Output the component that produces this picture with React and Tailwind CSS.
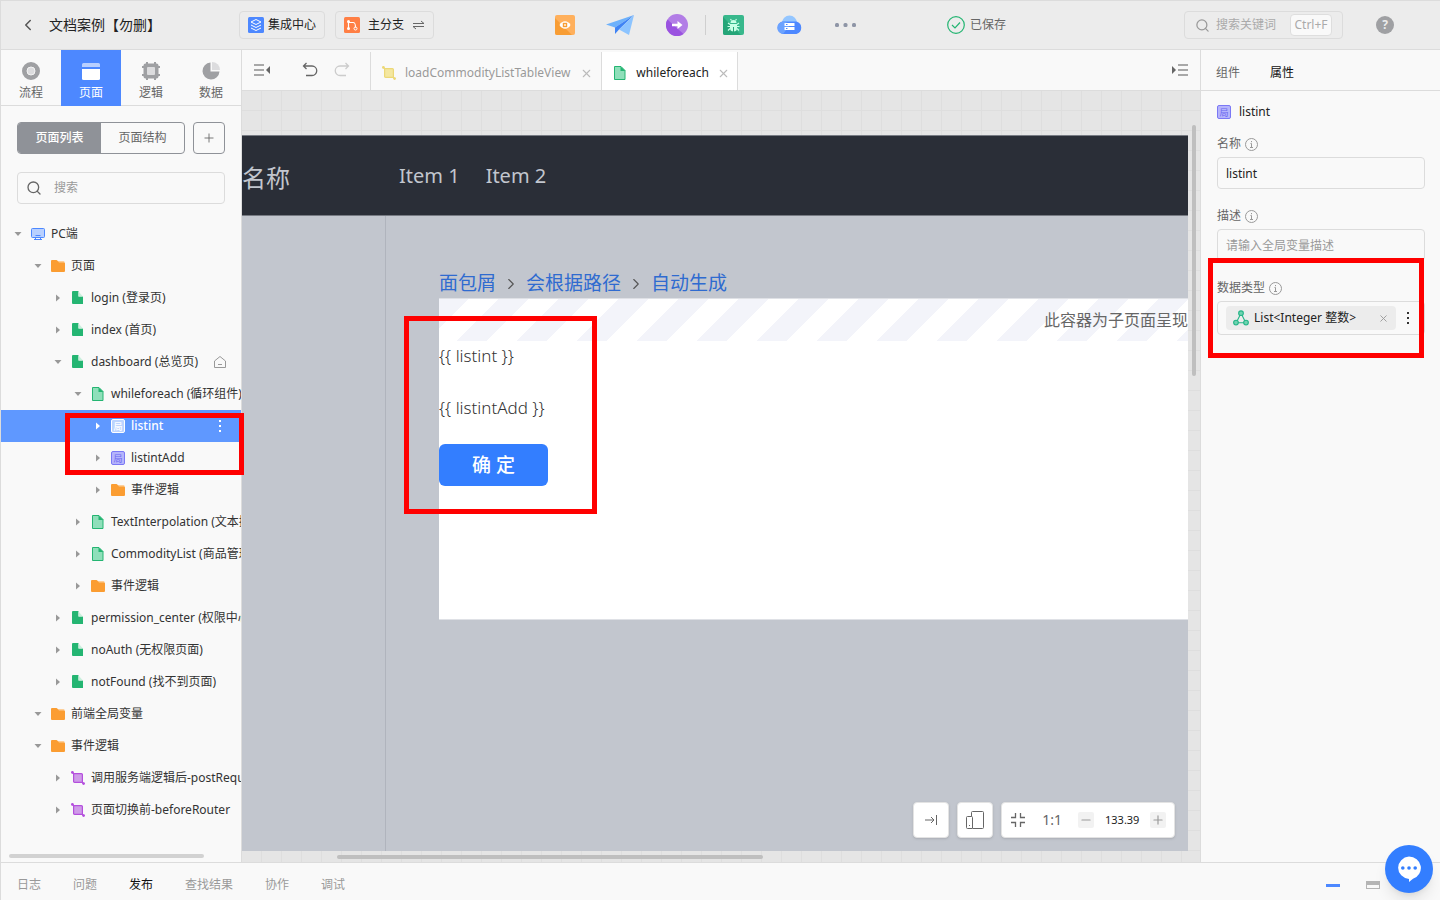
import { useState } from 'react';
import { ChevronLeft, ChevronRight, Search, X, Plus, Minus } from 'lucide-react';

function FileIcon() {
  return (
    <svg width="14" height="14" viewBox="0 0 14 14" className="shrink-0">
      <path d="M1 1a1 1 0 0 1 1-1h5.500v5.500H12V13H2a1 1 0 0 1-1-1z" fill="#24b572" />
      <path d="M7.500 0.500l4.500 5H7.500z" fill="#c9efdc" />
    </svg>
  );
}

function SubFileIcon() {
  return (
    <svg width="14" height="14" viewBox="0 0 14 14" className="shrink-0">
      <path d="M1.500 0.500h6.500l4 4v9h-10.500z" fill="#8fdfba" stroke="#24b572" />
      <path d="M7.500 0.500l5 4.500h-5z" fill="#24b572" />
    </svg>
  );
}

function FolderIcon() {
  return (
    <svg width="14" height="14" viewBox="0 0 14 14" className="shrink-0">
      <path d="M7 2h5.500a1 1 0 0 1 1 1v3H7z" fill="#fdcf99" />
      <path d="M0 2a1 1 0 0 1 1-1h4.500a1 1 0 0 1 .8.4L8 3.500h5a1 1 0 0 1 1 1V12a1 1 0 0 1-1 1H1a1 1 0 0 1-1-1z" fill="#fb9d32" />
    </svg>
  );
}

function MonitorIcon() {
  return (
    <svg width="14" height="14" viewBox="0 0 14 14" className="shrink-0" stroke="#4d88ff">
      <rect x="0.5" y="1.5" width="13" height="9" rx="1" fill="#b8d0ff" />
      <path d="M4.500 8.500h5M3 12.500h8M4.500 10.500v2M9.500 10.500v2" fill="none" />
    </svg>
  );
}

function LogicIcon({ stroke = '#b44fdd', fill = '#cf9be8' }) {
  return (
    <svg width="14" height="14" viewBox="0 0 14 14" className="shrink-0">
      <path d="M1 1l3 3M10 10l3 3" stroke={stroke} strokeWidth="1.4" />
      <rect x="2.600" y="2.600" width="8.800" height="8.800" rx="1" fill={fill} stroke={stroke} strokeWidth="1.200" />
      <circle cx="1.400" cy="1.400" r="1.400" fill={stroke} />
      <circle cx="12.600" cy="12.600" r="1.400" fill={stroke} />
    </svg>
  );
}

function InfoIcon() {
  return (
    <svg width="13" height="13" viewBox="0 0 13 13" fill="none" stroke="#999">
      <circle cx="6.500" cy="6.500" r="6" />
      <path d="M6.500 3v1.200M5.500 5.500h1v4M5 9.500h3" />
    </svg>
  );
}

function VarIcon({ active }) {
  return (
    <span
      className={
        active
          ? 'flex h-[14px] w-[14px] shrink-0 items-center justify-center rounded-xs border border-white bg-[#bcd4ff] text-[9px] leading-none text-white'
          : 'flex h-[14px] w-[14px] shrink-0 items-center justify-center rounded-xs border border-[#7b78f5] bg-[#b5b4fb] text-[9px] leading-none text-[#6a66f0]'
      }
    >
      局
    </span>
  );
}

function MoreDots() {
  return (
    <svg width="4" height="14" viewBox="0 0 4 14" fill="currentColor">
      <rect x="1" y="1" width="2" height="2" />
      <rect x="1" y="6" width="2" height="2" />
      <rect x="1" y="11" width="2" height="2" />
    </svg>
  );
}

const icons = {
  pc: <MonitorIcon />,
  folder: <FolderIcon />,
  file: <FileIcon />,
  sub: <SubFileIcon />,
  logic: <LogicIcon />,
};

const indents = ['pl-[10px]', 'pl-[30px]', 'pl-[50px]', 'pl-[70px]', 'pl-[90px]'];

const tree = [
  { level: 0, icon: 'pc', label: 'PC端', open: true },
  { level: 1, icon: 'folder', label: '页面', open: true },
  { level: 2, icon: 'file', label: 'login (登录页)' },
  { level: 2, icon: 'file', label: 'index (首页)' },
  { level: 2, icon: 'file', label: 'dashboard (总览页)', open: true, home: true },
  { level: 3, icon: 'sub', label: 'whileforeach (循环组件)', open: true },
  { level: 4, icon: 'var', label: 'listint' },
  { level: 4, icon: 'var', label: 'listintAdd' },
  { level: 4, icon: 'folder', label: '事件逻辑' },
  { level: 3, icon: 'sub', label: 'TextInterpolation (文本插值)' },
  { level: 3, icon: 'sub', label: 'CommodityList (商品管理)' },
  { level: 3, icon: 'folder', label: '事件逻辑' },
  { level: 2, icon: 'file', label: 'permission_center (权限中心)' },
  { level: 2, icon: 'file', label: 'noAuth (无权限页面)' },
  { level: 2, icon: 'file', label: 'notFound (找不到页面)' },
  { level: 1, icon: 'folder', label: '前端全局变量', open: true },
  { level: 1, icon: 'folder', label: '事件逻辑', open: true },
  { level: 2, icon: 'logic', label: '调用服务端逻辑后-postRequest' },
  { level: 2, icon: 'logic', label: '页面切换前-beforeRouter' },
];

function TreeRow({ item, active, onSelect }) {
  return (
    <li className={`flex h-8 items-center ${indents[item.level]} ${active ? 'bg-[#5f98ff] font-medium text-white' : ''}`}>
      <button onClick={onSelect} className="flex shrink-0 items-center gap-1.5 whitespace-nowrap">
        <span className="flex w-[14px] justify-center">
          <svg width="8" height="8" viewBox="0 0 8 8" fill={active ? '#fff' : '#999'}>
            <path d={item.open ? 'M0.500 2h7L4 6z' : 'M2 0.500v7L6 4z'} />
          </svg>
        </span>
        {item.icon === 'var' ? <VarIcon active={active} /> : icons[item.icon]}
        <span>{item.label}</span>
      </button>
      {item.home && (
        <svg width="14" height="14" viewBox="0 0 14 14" fill="none" stroke="#999" className="ml-[15px] shrink-0">
          <path d="M1.500 6L7 1.500 12.500 6v6.500h-11zM5 9.500h4" />
        </svg>
      )}
      {active && (
        <button aria-label="更多" className="mr-[19px] ml-auto">
          <MoreDots />
        </button>
      )}
    </li>
  );
}

const navTabs = [
  {
    label: '流程',
    icon: (
      <>
        <circle cx="9" cy="9" r="6.500" fill="#dcdcde" stroke="#9fa0a3" strokeWidth="5" />
        <circle cx="9" cy="9" r="4" fill="#dcdcde" stroke="#f2f2f2" />
      </>
    ),
  },
  {
    label: '页面',
    icon: (
      <>
        <path d="M0 5V2.500A1.500 1.500 0 0 1 1.500 1h15A1.500 1.500 0 0 1 18 2.500V5z" fill="#b8cfff" />
        <path d="M0 7h18v9.500a1.500 1.500 0 0 1-1.500 1.500h-15A1.500 1.500 0 0 1 0 16.500z" fill="#fff" />
      </>
    ),
  },
  {
    label: '逻辑',
    icon: (
      <>
        <path d="M5 0v18M13 0v18M0 5h18M0 13h18" stroke="#9fa0a3" strokeWidth="2" />
        <rect x="1.500" y="1.500" width="15" height="15" rx="2" fill="#9fa0a3" />
        <rect x="5" y="5" width="8" height="8" rx="1" fill="#dcdcde" />
      </>
    ),
  },
  {
    label: '数据',
    icon: (
      <>
        <path d="M8.500 0.500a8.500 8.500 0 1 0 9 9h-9z" fill="#9fa0a3" />
        <path d="M10 0a8 8 0 0 1 8 8h-8z" fill="#dcdcde" />
      </>
    ),
  },
];

function Sidebar() {
  const [tab, setTab] = useState('页面');
  const [selected, setSelected] = useState(6);

  return (
    <aside className="flex w-[241px] shrink-0 flex-col border-r border-[#dcdcdc] bg-[#f9f9f9]">
      <nav className="flex h-14 shrink-0 border-b border-[#dcdcdc]">
        {navTabs.map((t) => (
          <button
            key={t.label}
            onClick={() => setTab(t.label)}
            className={`flex h-14 flex-1 flex-col items-center gap-[5px] pt-3 ${tab === t.label ? 'bg-[#4d88ff] text-white' : 'text-[#666]'}`}
          >
            <svg width="18" height="18" viewBox="0 0 18 18" fill="none">
              {t.icon}
            </svg>
            <span className="leading-4">{t.label}</span>
          </button>
        ))}
      </nav>

      <div className="flex gap-2 px-4 pt-4">
        <div className="flex h-8 flex-1 overflow-hidden rounded border border-[#8f9298]">
          <button className="flex-1 bg-[#8f9298] font-medium text-white">页面列表</button>
          <button className="flex-1 text-[#666]">页面结构</button>
        </div>
        <button aria-label="新增" className="flex h-8 w-8 items-center justify-center rounded border border-[#8f9298] text-[#666]">
          <Plus size={14} strokeWidth={1.5} />
        </button>
      </div>

      <label className="mx-4 mt-[18px] flex h-8 shrink-0 items-center gap-3 rounded border border-[#dcdcdc] px-2 text-[#666]">
        <Search size={16} strokeWidth={2} className="shrink-0" />
        <input aria-label="搜索" placeholder="搜索" className="w-full min-w-0 outline-none placeholder:text-[#999]" />
      </label>

      <ul className="mt-[14px] min-h-0 flex-1 overflow-hidden text-[#333]">
        {tree.map((item, i) => (
          <TreeRow key={i} item={item} active={i === selected} onSelect={() => setSelected(i)} />
        ))}
      </ul>
      <div className="mb-1 ml-2 h-1 w-[195px] shrink-0 rounded-full bg-[#d2d2d2]" />
    </aside>
  );
}

function Header() {
  return (
    <header className="flex h-[49px] shrink-0 items-center border-b border-[#dcdcdc] bg-[#ececec] text-[#333]">
      <button aria-label="返回" className="ml-[18px] text-[#555]">
        <ChevronLeft size={18} strokeWidth={2} />
      </button>
      <h1 className="ml-3 w-[190px] text-sm text-[#222]">文档案例【勿删】</h1>
      <button className="flex h-7 items-center gap-1 rounded border border-[#dcdcdc] px-2 text-[#222]">
        <svg width="16" height="16" viewBox="0 0 16 16" fill="none" stroke="#fff">
          <rect width="16" height="16" rx="1.500" fill="#4d88ff" stroke="none" />
          <path d="M8 2.500l5 2.500-5 2.500-5-2.500zM3 8l5 2.500 5-2.500M3 11l5 2.500 5-2.500" />
        </svg>
        集成中心
      </button>
      <button className="ml-[10px] flex h-7 items-center gap-2 rounded border border-[#dcdcdc] px-2 text-[#222]">
        <svg width="16" height="16" viewBox="0 0 16 16" fill="none" stroke="#fff">
          <rect width="16" height="16" rx="1.500" fill="#ff7f45" stroke="none" />
          <path d="M4.500 5v6M4.500 5.500h4.500c2 0 2.500 1 2.500 5" strokeWidth="1.200" />
          <circle cx="4.500" cy="4.500" r="1.500" fill="#fff" stroke="none" />
          <circle cx="4.500" cy="11.500" r="1.500" fill="#fff" stroke="none" />
          <circle cx="11.500" cy="11.500" r="1.500" stroke="#fff" />
        </svg>
        主分支
        <svg width="13" height="10" viewBox="0 0 13 10" fill="none" stroke="#666">
          <path d="M1 3.500h11L9 1M12 6.500H1L4 9" />
        </svg>
      </button>

      <div className="ml-[121px] flex items-center">
        <button aria-label="预览">
          <svg width="20" height="20" viewBox="0 0 20 20">
            <rect width="20" height="20" rx="2" fill="#ffb05c" />
            <path d="M0 3l17 17H2a2 2 0 0 1-2-2z" fill="#f89d34" />
            <path d="M4.500 10c2.500-5 8.500-5 11 0-2.500 5-8.500 5-11 0z" fill="#fff" />
            <rect x="8.500" y="8.500" width="3" height="3" fill="#fff" stroke="#f89d34" strokeWidth="1.400" />
          </svg>
        </button>
        <button aria-label="发布" className="ml-[31px]">
          <svg width="28" height="22" viewBox="0 0 28 22">
            <path d="M28 1L0 10.500l9 3z" fill="#6db1fb" />
            <path d="M28 1L9 13.500v6.500l4-4.500z" fill="#3e83f5" />
            <path d="M28 1l-5 20-10-5.500z" fill="#8cc4ff" />
          </svg>
        </button>
        <button aria-label="前往" className="ml-8">
          <svg width="22" height="22" viewBox="0 0 22 22">
            <circle cx="11" cy="11" r="11" fill="#b27de6" />
            <path d="M1.500 5.500L17.500 20A11 11 0 0 1 1.500 5.500z" fill="#9a52e0" />
            <path d="M6 9.800h5.500V7l5 4-5 4v-2.800H6z" fill="#fff" />
          </svg>
        </button>
        <span className="ml-[17px] h-5 w-px bg-[#cfcfcf]" />
        <button aria-label="调试" className="ml-[17px]">
          <svg width="21" height="20" viewBox="0 0 21 20">
            <rect width="21" height="20" rx="2" fill="#38b88c" />
            <path d="M0 2l18 18H2a2 2 0 0 1-2-2z" fill="#25a578" />
            <path d="M7 9h7v4a3.500 3.500 0 0 1-7 0z" fill="#c9ffe6" />
            <path d="M7.500 8a3 3 0 0 1 6 0z" fill="#c9ffe6" />
            <path d="M8.500 5.500L7.500 4M12.500 5.500l1-1.500M7 9.500L5 8M14 9.500L16 8M7 11.500H4.500M14 11.500h2.500M7 13.500l-2 2M14 13.500l2 2" stroke="#c9ffe6" strokeWidth="1.200" />
            <path d="M10.500 12v5" stroke="#25a578" />
          </svg>
        </button>
        <button aria-label="云服务" className="ml-8">
          <svg width="27" height="20" viewBox="0 0 27 20">
            <circle cx="13.500" cy="8" r="7.500" fill="#94c6ff" />
            <path d="M6.500 6.500h14a6.500 6.500 0 0 1 0 12.500h-14a6.500 6.500 0 0 1 0-12.500z" fill="#4d88ff" />
            <path d="M6.500 6.500c4 0 6 2 6.500 5L7 19A6.300 6.300 0 0 1 6.500 6.500z" fill="#6ba2ff" />
            <rect x="8.500" y="8" width="10" height="3" fill="#fff" />
            <rect x="8.500" y="12" width="10" height="3" fill="#fff" />
            <path d="M10 9.500h1.500M10 13.500h1.500" stroke="#4d88ff" />
          </svg>
        </button>
        <button aria-label="更多" className="ml-8">
          <svg width="22" height="4" viewBox="0 0 22 4" fill="#8e95a6">
            <rect width="4" height="4" rx="1.500" />
            <rect x="8.500" width="4" height="4" rx="1.500" />
            <rect x="17" width="4" height="4" rx="1.500" />
          </svg>
        </button>
      </div>

      <div className="ml-[90px] flex items-center gap-[5px] text-[#666]">
        <svg width="18" height="18" viewBox="0 0 18 18" fill="none" stroke="#24b572" strokeWidth="1.200">
          <circle cx="9" cy="9" r="8.300" />
          <path d="M5 9l3 3 5-5.500" />
        </svg>
        已保存
      </div>

      <label className="mr-[33px] ml-auto flex h-7 w-[159px] items-center rounded border border-[#dcdcdc] px-2.5 text-[#999]">
        <Search size={15} strokeWidth={2} className="shrink-0" />
        <input aria-label="搜索关键词" placeholder="搜索关键词" className="ml-1.5 w-full min-w-0 outline-none placeholder:text-[#aaa]" />
        <kbd className="flex h-[22px] w-[42px] shrink-0 items-center justify-center rounded border border-[#dedede] bg-[#f9f9f9] font-[inherit] text-[#aaa]">Ctrl+F</kbd>
      </label>
      <button aria-label="帮助" className="mr-[46px] flex h-[18px] w-[18px] items-center justify-center rounded-full bg-[#9fa0a3] font-bold text-[#ececec]">
        ?
      </button>
    </header>
  );
}

function MenuLines({ flip }) {
  return (
    <svg width="16" height="14" viewBox="0 0 16 14" className={flip ? 'rotate-180' : ''}>
      <path d="M0 2h10M0 7h10M0 12h10" stroke="#a8a8a8" strokeWidth="2" />
      <path d="M16 3v8l-4-4z" fill="#666" />
    </svg>
  );
}

function EditorTabs() {
  return (
    <div className="flex h-[41px] shrink-0 items-center border-b border-[#dcdcdc] bg-[#f9f9f9]">
      <button aria-label="收起左侧" className="ml-3">
        <MenuLines />
      </button>
      <button aria-label="撤销" className="ml-8">
        <svg width="16" height="16" viewBox="0 0 16 16" fill="none" stroke="#666" strokeWidth="1.300">
          <path d="M4.500 1L1.500 4l3 3M1.500 4H10a4.700 4.700 0 0 1 0 9.500H4" />
        </svg>
      </button>
      <button aria-label="重做" className="mr-5 ml-4">
        <svg width="16" height="16" viewBox="0 0 16 16" fill="none" stroke="#ccc" strokeWidth="1.300">
          <path d="M11.500 1l3 3-3 3M14.500 4H6a4.700 4.700 0 0 0 0 9.500h6" />
        </svg>
      </button>
      <div className="flex h-[38px] items-center self-end border-l border-[#dcdcdc] pt-1 pr-2 pl-[11px] text-[#999]">
        <LogicIcon stroke="#ecd877" fill="#f4e7a0" />
        <a href="#load" className="ml-[9px]">loadCommodityListTableView</a>
        <button aria-label="关闭" className="ml-2.5 text-[#bbb]">
          <X size={13} />
        </button>
      </div>
      <div className="flex h-[38px] items-center self-end border-x border-[#dcdcdc] bg-white pt-1 pr-[7px] pl-[11px] text-[#222]">
        <SubFileIcon />
        <a href="#while" className="ml-[9px]">whileforeach</a>
        <button aria-label="关闭" className="ml-2 text-[#bbb]">
          <X size={13} />
        </button>
      </div>
      <button aria-label="收起右侧" className="mr-3 ml-auto">
        <MenuLines flip />
      </button>
    </div>
  );
}

function ZoomBar() {
  return (
    <div className="absolute right-[25px] bottom-6 flex h-9 gap-2 text-[#666]">
      <button aria-label="收起" className="flex w-9 items-center justify-center rounded border border-[#e3e3e3] bg-white shadow">
        <svg width="14" height="12" viewBox="0 0 14 12" fill="none" stroke="currentColor">
          <path d="M1 6h9M7 3l3 3-3 3M12.500 1v10" />
        </svg>
      </button>
      <button aria-label="设备" className="flex w-9 items-center justify-center rounded border border-[#e3e3e3] bg-white shadow">
        <svg width="20" height="20" viewBox="0 0 20 20" fill="none" stroke="currentColor">
          <path d="M6.500 6.500v-4a1 1 0 0 1 1-1h10a1 1 0 0 1 1 1v15a1 1 0 0 1-1 1H8M1.500 7.500a1 1 0 0 1 1-1h4a1 1 0 0 1 1 1v11h-5a1 1 0 0 1-1-1zM4 15.500h1" />
        </svg>
      </button>
      <div className="flex items-center rounded border border-[#e3e3e3] bg-white px-2 shadow">
        <button aria-label="适应画布">
          <svg width="16" height="16" viewBox="0 0 16 16" fill="none" stroke="currentColor" strokeWidth="1.300">
            <path d="M5.500 1v4.500H1M10.500 1v4.500H15M5.500 15v-4.500H1M10.500 15v-4.500H15" />
          </svg>
        </button>
        <button className="ml-4 text-sm">1:1</button>
        <button aria-label="缩小" className="ml-4 flex h-4 w-4 items-center justify-center rounded-xs bg-[#f2f2f2] text-[#999]">
          <Minus size={14} />
        </button>
        <input aria-label="缩放比例" defaultValue="133.39" className="mx-2 w-10 pl-[3px] text-[11px] text-[#222] outline-none" />
        <button aria-label="放大" className="flex h-4 w-4 items-center justify-center rounded-xs bg-[#f2f2f2] text-[#999]">
          <Plus size={14} />
        </button>
      </div>
    </div>
  );
}

function Canvas() {
  return (
    <section className="relative flex min-h-0 flex-1 flex-col bg-[#e5e5e5] bg-[linear-gradient(to_left,#dedede_1px,transparent_1px),linear-gradient(to_top,#dedede_1px,transparent_1px)] bg-[size:20px_20px] pt-11 pr-3 pb-[11px]">
      <div className="flex flex-1 flex-col bg-[#c2c6ce]">
        <div className="flex h-[81px] shrink-0 items-center overflow-hidden border-y border-[#777b83] bg-[#2a2e37] text-xl whitespace-nowrap text-[#c2c6ce]">
          <span className="w-[157px] pt-1 text-2xl">名称</span>
          <a href="#item1" className="mr-[26px]">Item 1</a>
          <a href="#item2">Item 2</a>
        </div>
        <div className="flex flex-1">
          <div className="w-36 shrink-0 border-r border-[#b0b4bd]" />
          <div className="flex min-w-0 flex-1 flex-col pt-14 pl-[53px]">
            <div className="flex h-6 items-center gap-1.5 text-[19px] whitespace-nowrap text-[#2f6bd0]">
              <a href="#a">面包屑</a>
              <ChevronRight size={18} strokeWidth={1.5} className="text-[#555]" />
              <a href="#b">会根据路径</a>
              <ChevronRight size={18} strokeWidth={1.5} className="text-[#555]" />
              <a href="#c">自动生成</a>
            </div>
            <div className="mt-[2px] h-[322px] overflow-hidden border-y border-[#dfe1e6] bg-white">
              <div className="flex h-[42px] items-center justify-end bg-[linear-gradient(135deg,#f3f4fa_25%,transparent_25%,transparent_50%,#f3f4fa_50%,#f3f4fa_75%,transparent_75%)] bg-[size:60px_60px] text-base whitespace-nowrap text-[#666]">
                此容器为子页面呈现
              </div>
              <p className="mt-[3px] text-[17px] leading-6 font-light text-[#333]">{'{{ listint }}'}</p>
              <p className="mt-7 text-[17px] leading-6 font-light text-[#333]">{'{{ listintAdd }}'}</p>
              <button className="mt-6 h-[42px] w-[109px] rounded-md bg-[#337eff] pt-px text-[19px] font-medium text-white">确 定</button>
            </div>
          </div>
        </div>
      </div>
      <div className="absolute top-[34px] right-1 h-[251px] w-1 rounded-full bg-[#bfbfbf]" />
      <div className="absolute bottom-[3px] left-[95px] h-1 w-[426px] rounded-full bg-[#bfbfbf]" />
      <ZoomBar />
    </section>
  );
}

function FieldLabel({ htmlFor, children }) {
  return (
    <label htmlFor={htmlFor} className="flex items-center gap-1 leading-4 text-[#666]">
      {children}
      <InfoIcon />
    </label>
  );
}

function PropertyPanel() {
  return (
    <aside className="flex w-60 shrink-0 flex-col border-l border-[#dcdcdc] bg-[#f9f9f9]">
      <nav className="flex h-[41px] shrink-0 items-center gap-[30px] border-b border-[#dcdcdc] px-[15px] pt-1.5">
        <button className="text-[#666]">组件</button>
        <button className="text-[#111]">属性</button>
      </nav>
      <div className="px-4 pr-[15px] pt-[13px]">
        <div className="mb-4 flex h-4 items-center gap-2 text-[#222]">
          <VarIcon />
          listint
        </div>
        <FieldLabel htmlFor="name">名称</FieldLabel>
        <input id="name" defaultValue="listint" className="mt-[5px] mb-[19px] h-8 w-full rounded border border-[#dcdcdc] px-2 text-[#222] outline-none" />
        <FieldLabel htmlFor="desc">描述</FieldLabel>
        <input id="desc" placeholder="请输入全局变量描述" className="mt-[5px] mb-[19px] h-8 w-full rounded border border-[#dcdcdc] px-2 outline-none placeholder:text-[#999]" />
        <FieldLabel htmlFor="type-clear">数据类型</FieldLabel>
        <div className="mt-[5px] flex h-[34px] items-center justify-between rounded border border-[#dcdcdc] pr-[14px] pl-2">
          <div className="flex h-6 w-[170px] items-center rounded bg-[#ececec] px-[7px] text-[#222]">
            <svg width="16" height="16" viewBox="0 0 15 15" fill="#6fd3b0" stroke="#24b588">
              <path d="M7.500 3L3 12h9z" fill="none" />
              <circle cx="7.500" cy="3" r="2.200" />
              <circle cx="2.800" cy="11.800" r="2.200" />
              <circle cx="12.200" cy="11.800" r="2.200" />
            </svg>
            <span className="ml-[5px]">{'List<Integer 整数>'}</span>
            <button id="type-clear" aria-label="清除" className="ml-auto text-[#999]">
              <X size={11} strokeWidth={2} />
            </button>
          </div>
          <button aria-label="更多" className="text-[#333]">
            <MoreDots />
          </button>
        </div>
      </div>
    </aside>
  );
}

function Footer() {
  const tabs = ['日志', '问题', '发布', '查找结果', '协作', '调试'];
  return (
    <footer className="flex h-[38px] shrink-0 items-center gap-8 border-t border-[#dcdcdc] bg-[#f9f9f9] px-4 pt-1.5 text-[#999]">
      {tabs.map((t) => (
        <button key={t} className={t === '发布' ? 'text-[#111]' : ''}>
          {t}
        </button>
      ))}
      <div className="mr-11 ml-auto flex items-center gap-[26px]">
        <button aria-label="最小化" className="mt-[2px] h-[3px] w-[14px] bg-[#4d88ff]" />
        <button aria-label="展开" className="h-2 w-[14px] border border-t-4 border-[#b5b5b5]" />
      </div>
    </footer>
  );
}

function App() {
  return (
    <div className="relative flex h-screen flex-col overflow-hidden border-t border-l border-[#dcdcdc] bg-[#f9f9f9] font-['Noto_Sans','Noto_Sans_CJK_SC',sans-serif] text-xs">
      <Header />
      <div className="flex min-h-0 flex-1">
        <Sidebar />
        <main className="flex min-w-0 flex-1 flex-col">
          <EditorTabs />
          <Canvas />
        </main>
        <PropertyPanel />
      </div>
      <Footer />

      {/* Highlight frames */}
      <div className="pointer-events-none absolute top-[412px] left-16 h-[62px] w-[179px] border-5 border-[#ff0000]" />
      <div className="pointer-events-none absolute top-[315px] left-[403px] h-[198px] w-[193px] border-5 border-[#ff0000]" />
      <div className="pointer-events-none absolute top-[257px] right-4 h-[100px] w-[216px] border-5 border-[#ff0000]" />

      {/* Chat button */}
      <button aria-label="在线咨询" className="absolute right-[7px] bottom-[7px] flex h-12 w-12 items-center justify-center rounded-full bg-[#337eff] shadow-lg">
        <svg width="26" height="26" viewBox="0 0 26 26">
          <path d="M13 0.500a12 11.500 0 0 1 4 22.300L13 26v-3A12 11.300 0 0 1 13 0.500z" fill="#fff" />
          <circle cx="6.800" cy="12" r="1.800" fill="#337eff" />
          <circle cx="13" cy="12" r="1.800" fill="#337eff" />
          <circle cx="19.200" cy="12" r="1.800" fill="#337eff" />
        </svg>
      </button>
    </div>
  );
}

export default App;
